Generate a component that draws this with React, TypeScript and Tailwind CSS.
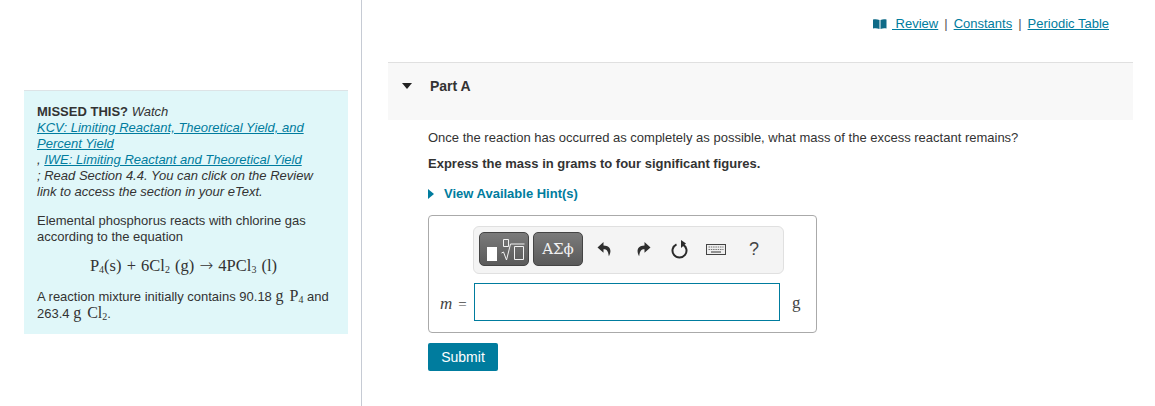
const link = 'text-[#007c9e] underline'
const math = "inline-block font-['Liberation_Serif',serif] text-[16px] leading-[15px] [word-spacing:2px]"

function Sub({ children }: { children: React.ReactNode }) {
  return <sub className="relative top-[2px] align-baseline text-[10px] leading-none">{children}</sub>
}

function Undo({ flip }: { flip?: boolean }) {
  return (
    <svg width="15" height="15" viewBox="0 0 15 15" className={flip ? '-scale-x-100' : ''}>
      <path d="M6.500 0 .5 5.500l6 5.200V7.300c3.200-.1 4.800 1.600 5.300 7 2.800-4.800 2.600-10.700-5.300-10.900z" fill="#2f2f2f" />
    </svg>
  )
}

export default function App() {
  return (
    <div className="flex h-[406px] w-[1155px] overflow-hidden bg-white font-['Liberation_Sans',Arial,sans-serif] text-[13px] leading-[16px] text-[#333]">
      {/* Sidebar */}
      <aside className="w-[362px] flex-shrink-0 border-r border-[#c6cbd4] pl-6 pr-[13px] pt-[90px]">
        <div className="h-[244px] border-t border-[#dde3e6] bg-[#e0f7f9] pl-[13px] pr-[15px] pt-[13px]">
          <p>
            <b>MISSED THIS?</b> <i>Watch</i>
          </p>
          <a className={`block pr-4 italic ${link}`}>KCV: Limiting Reactant, Theoretical Yield, and Percent Yield</a>
          <p className="italic">
            , <a className={link}>IWE: Limiting Reactant and Theoretical Yield</a>
          </p>
          <p className="pr-4 italic">; Read Section 4.4. You can click on the Review link to access the section in your eText.</p>
          <p className="mt-[13px]">Elemental phosphorus reacts with chlorine gas according to the equation</p>
          <p className="mt-[12px] pr-[3px] text-center font-['Liberation_Serif',serif] text-[16.5px] leading-[18px] [word-spacing:1px]">
            P<Sub>4</Sub>(s) + 6Cl<Sub>2</Sub> (g) <span className="font-['DejaVu_Sans',sans-serif] font-light">→</span> 4PCl<Sub>3</Sub> (l)
          </p>
          <p className="mt-[13px]">
            <span>A reaction mixture initially contains 90.18 </span>
            <span className={math}>g P<Sub>4</Sub></span>
            <span> and</span>
            <br />
            <span>263.4 </span>
            <span className={math}>g Cl<Sub>2</Sub></span>
            <span>.</span>
          </p>
        </div>
      </aside>

      {/* Main */}
      <main className="flex-1 pl-[26px] pr-[22px]">
        <div className="flex h-[47px] items-center justify-end gap-[6px] pr-[24px] pt-[1px]">
          <svg width="14" height="10" viewBox="0 0 14 10" className="mr-[-1px]">
            <path d="M0 .5C2 0 4 0 6.500 1v9C4 9 2 9 0 9.500zM13.500 .5C11.500 0 9.500 0 7.500 1v9c2.500-1 4-1 6-.5z" fill="#0e6a87" />
          </svg>
          <a className={link}>&nbsp;Review</a>
          <span className="text-[#555]">|</span>
          <a className={link}>Constants</a>
          <span className="text-[#555]">|</span>
          <a className={link}>Periodic Table</a>
        </div>

        <div className="mt-[15px] flex h-[58px] items-start border-t border-[#e0e0e0] bg-[#f8f8f8] pt-[15px] text-[14px] font-bold">
          <span className="ml-[14px] mt-[5px] h-0 w-0 border-x-[5px] border-t-[6px] border-x-transparent border-t-[#222]" />
          <span className="ml-[18px]">Part A</span>
        </div>

        <div className="pl-10">
          <p className="mt-[10px]">Once the reaction has occurred as completely as possible, what mass of the excess reactant remains?</p>
          <p className="mt-[10px] font-bold">Express the mass in grams to four significant figures.</p>
          <p className="mt-[14px] flex items-center font-bold text-[#007c9e]">
            <span className="h-0 w-0 border-y-[5px] border-l-[6px] border-y-transparent border-l-[#007c9e]" />
            <span className="ml-[10px]">View Available Hint(s)</span>
          </p>

          {/* Answer box */}
          <div className="mt-[13px] h-[118px] w-[389px] rounded border border-[#aaa] pt-[10px]">
            <div className="ml-[44px] flex h-[48px] w-[311px] items-center rounded-md border border-[#e0e0e0] bg-[#f4f4f4] pb-[2px] pl-[5px]">
              <div className="flex h-[34px] w-[50px] items-center justify-center gap-[4px] rounded-[5px] border border-[#444] bg-gradient-to-b from-[#7b7b7b] to-[#5a5a5a] pl-[3px]">
                <span className="mt-[9px] h-[14px] w-[10px] bg-white" />
                <svg width="24" height="23" viewBox="0 0 24 23" fill="none" stroke="#f2f2f2" strokeWidth="1">
                  <path d="M2.500 1.500h5v7h-5zM.5 15l2-1 3 8 4-16h14M13.500 8.500h9v13h-9z" />
                </svg>
              </div>
              <div className="ml-1 flex h-[34px] w-[50px] items-center justify-center rounded-[5px] border border-[#444] bg-gradient-to-b from-[#7b7b7b] to-[#5a5a5a] font-['DejaVu_Serif',serif] text-[15px] text-[#f2f2f2]">
                ΑΣϕ
              </div>
              <span className="ml-[14px] flex"><Undo /></span>
              <span className="ml-[24px] flex"><Undo flip /></span>
              <svg width="17" height="19" viewBox="0 0 17 19" fill="none" className="ml-[20px]">
                <path d="M5.500 4.300a7 7 0 1 0 6 0" stroke="#2a2a2a" strokeWidth="2" />
                <path d="M10 0v8l5-4.500z" fill="#2a2a2a" />
              </svg>
              <svg width="20" height="11" viewBox="0 0 20 11" className="ml-[18px]">
                <rect x=".5" y=".5" width="19" height="10" fill="#eee" stroke="#444" />
                <path d="M2.500 3h15M2.500 5.500h15" stroke="#777" strokeWidth="1.200" strokeDasharray="1.500 .8" />
                <path d="M5 8h10" stroke="#555" strokeWidth="1.200" />
              </svg>
              <span className="ml-[23px] text-[18px] text-[#444]">?</span>
            </div>
            <div className="mt-[9px] flex items-center">
              <span className="ml-[11px] flex w-[34px] items-baseline gap-[6px] whitespace-nowrap pt-[3px] font-['Liberation_Serif',serif] text-[15px] text-[#444]">
                <i className="text-[17px]">m</i>
                <span>=</span>
              </span>
              <div className="h-[38px] w-[306px] border border-[#007c9e] bg-white" />
              <span className="ml-[12px] pt-[1px] font-['Liberation_Serif',serif] text-[17px] text-[#444]">g</span>
            </div>
          </div>

          <button className="mt-[10px] h-[28px] w-[70px] rounded-[2px] bg-[#007c9e] text-[14px] text-white">Submit</button>
        </div>
      </main>
    </div>
  )
}
